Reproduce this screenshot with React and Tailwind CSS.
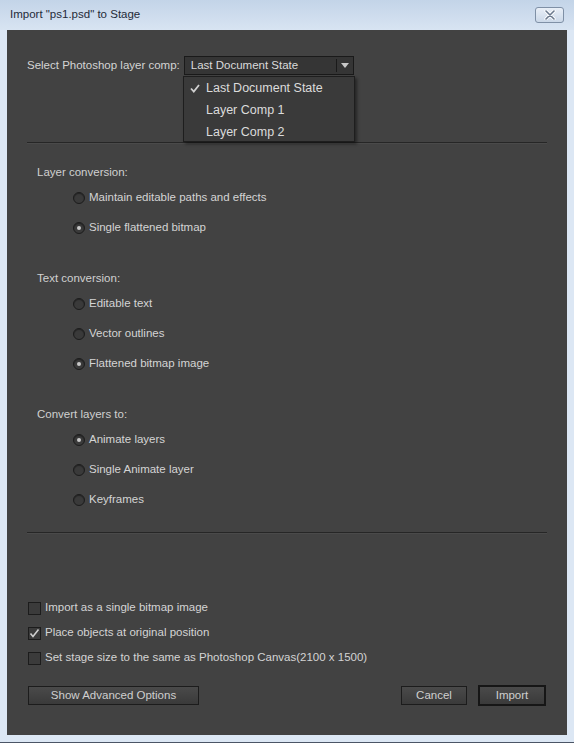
import React from "react";

const font = { fontFamily: '"Liberation Sans", Arial, sans-serif' };

function Radio({ checked, label }) {
  return (
    <div className="flex items-center h-[16px]">
      <span className="w-[12px] h-[12px] rounded-full border border-[#1c1c1c] bg-[#3a3a3a] flex items-center justify-center shadow-[inset_0_1px_1px_rgba(0,0,0,0.4)]">
        {checked && <span className="w-[4px] h-[4px] rounded-full bg-[#c8c8c8]" />}
      </span>
      <span className="ml-[4px] text-[11.5px] text-[#d4d4d4]">{label}</span>
    </div>
  );
}

function Check({ checked, label }) {
  return (
    <div className="flex items-center h-[16px]">
      <span className="w-[13px] h-[13px] border border-[#1c1c1c] bg-[#3b3b3b] flex items-center justify-center">
        {checked && (
          <svg width="11" height="11" viewBox="0 0 11 11">
            <path d="M1.5 5.5 L4 8.5 L9.5 1.5" fill="none" stroke="#cfcfcf" strokeWidth="1.6" />
          </svg>
        )}
      </span>
      <span className="ml-[4px] text-[11.5px] text-[#d4d4d4]">{label}</span>
    </div>
  );
}

function Section({ title, items }) {
  return (
    <div>
      <div className="ml-[10px] h-[16px] flex items-center text-[11.5px] text-[#d0d0d0]">{title}</div>
      <div className="ml-[46px] mt-[9px] flex flex-col gap-[14px]">
        {items.map((it) => (
          <Radio key={it.label} label={it.label} checked={it.checked} />
        ))}
      </div>
    </div>
  );
}

function Btn({ children, className = "" }) {
  return (
    <div
      className={
        "flex items-center justify-center text-[11.5px] text-[#cfcfcf] bg-gradient-to-b from-[#4a4a4a] to-[#3a3a3a] " +
        className
      }
    >
      {children}
    </div>
  );
}

export default function App() {
  return (
    <div style={font} className="w-[574px] h-[743px] flex flex-col bg-[#dce7f4] border-b border-[#4b5566] overflow-hidden">
      {/* title bar */}
      <div className="h-[30px] flex items-center justify-between bg-gradient-to-b from-[#c3d4e8] to-[#d8e4f2] pl-[10px] pr-[10px]">
        <span className="text-[11.5px] text-[#1f2a38]">Import "ps1.psd" to Stage</span>
        <div className="w-[29px] h-[16px] rounded-[3px] border border-[#7f90a6] bg-gradient-to-b from-[#e9eff7] to-[#cbd8e8] flex items-center justify-center">
          <svg width="12" height="10" viewBox="0 0 12 10">
            <path d="M2 1 L10 9 M10 1 L2 9" stroke="#ffffff" strokeWidth="3.2" strokeLinecap="round" />
            <path d="M2 1 L10 9 M10 1 L2 9" stroke="#6b7a8e" strokeWidth="1.6" strokeLinecap="round" />
          </svg>
        </div>
      </div>

      {/* content */}
      <div className="flex-1 mx-[7px] bg-[#424242] relative px-[20px] pt-[26px]">
        <div className="flex items-center h-[19px]">
          <span className="text-[11.5px] text-[#d4d4d4]">Select Photoshop layer comp:</span>
          <div className="ml-[4px] w-[170px] h-[19px] bg-[#353535] border border-[#1a1a1a] flex items-center">
            <span className="flex-1 pl-[6px] text-[11.5px] text-[#dadada]">Last Document State</span>
            <span className="w-px h-[13px] bg-[#1a1a1a]" />
            <span className="w-[16px] flex items-center justify-center">
              <svg width="8" height="5" viewBox="0 0 8 5">
                <path d="M0 0 H8 L4 5 Z" fill="#c8c8c8" />
              </svg>
            </span>
          </div>
        </div>

        {/* open menu */}
        <div className="absolute left-[176px] top-[46px] w-[172px] h-[66px] bg-[#3a3a3a] border border-[#1e1e1e] shadow-[2px_2px_3px_rgba(0,0,0,0.45)] z-10">
          {[
            { t: "Last Document State", c: true },
            { t: "Layer Comp 1" },
            { t: "Layer Comp 2" },
          ].map((m) => (
            <div key={m.t} className="h-[22px] flex items-center text-[12.5px] text-[#dcdcdc]">
              <span className="w-[22px] flex justify-center">
                {m.c && (
                  <svg width="10" height="9" viewBox="0 0 10 9">
                    <path d="M1 4.5 L3.8 7.5 L9 1" fill="none" stroke="#d0d0d0" strokeWidth="1.8" />
                  </svg>
                )}
              </span>
              <span>{m.t}</span>
            </div>
          ))}
        </div>

        <div className="mt-[67px] h-[2px] border-t border-[#262626] border-b border-b-[#4a4a4a]" />

        <div className="mt-[21px]">
          <Section
            title="Layer conversion:"
            items={[
              { label: "Maintain editable paths and effects" },
              { label: "Single flattened bitmap", checked: true },
            ]}
          />
        </div>
        <div className="mt-[35px]">
          <Section
            title="Text conversion:"
            items={[
              { label: "Editable text" },
              { label: "Vector outlines" },
              { label: "Flattened bitmap image", checked: true },
            ]}
          />
        </div>
        <div className="mt-[35px]">
          <Section
            title="Convert layers to:"
            items={[
              { label: "Animate layers", checked: true },
              { label: "Single Animate layer" },
              { label: "Keyframes" },
            ]}
          />
        </div>

        <div className="mt-[24px] h-[2px] border-t border-[#262626] border-b border-b-[#4a4a4a]" />

        <div className="mt-[66px] ml-[1px] flex flex-col gap-[9px]">
          <Check label="Import as a single bitmap image" />
          <Check label="Place objects at original position" checked />
          <Check label="Set stage size to the same as Photoshop Canvas(2100 x 1500)" />
        </div>

        <div className="mt-[19px] ml-[1px] flex items-center">
          <Btn className="w-[171px] h-[19px] border border-[#1c1c1c]">Show Advanced Options</Btn>
          <div className="flex-1" />
          <Btn className="w-[66px] h-[19px] border border-[#1c1c1c]">Cancel</Btn>
          <Btn className="ml-[11px] mr-[1px] w-[68px] h-[21px] border-2 border-[#161616]">Import</Btn>
        </div>
      </div>

      <div className="h-[7px]" />
    </div>
  );
}
